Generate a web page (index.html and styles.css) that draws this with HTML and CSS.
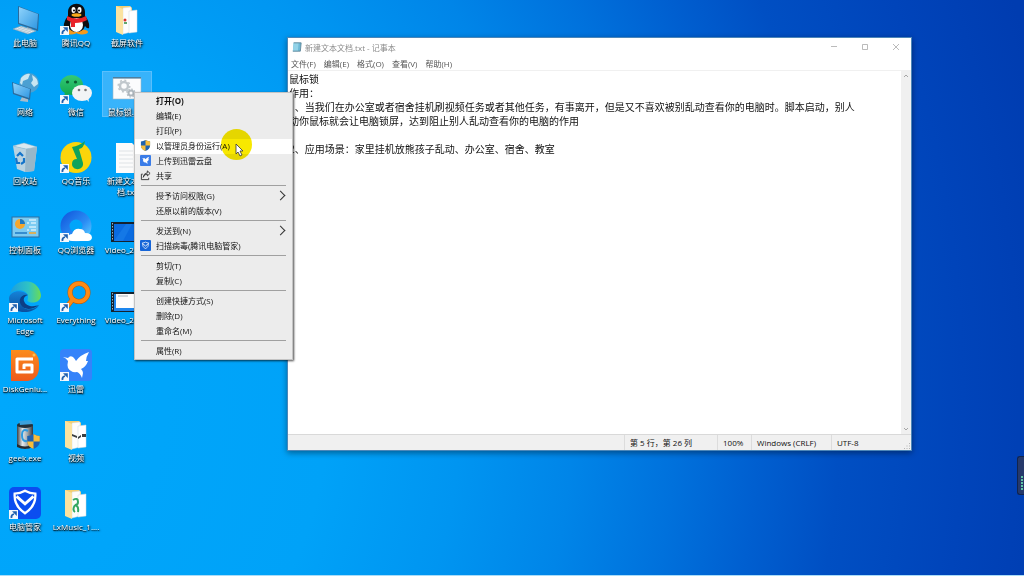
FILE: index.html
```html
<!DOCTYPE html>
<html lang="zh-CN">

<head>
    <meta charset="UTF-8">
    <meta name="viewport" content="width=device-width, initial-scale=1.0">
    <title>桌面</title>
    <link rel="stylesheet" href="styles.css">
</head>

<body>
    <!-- 公用图形 -->
    <svg class="defs" width="0" height="0" aria-hidden="true">
        <defs>
            <linearGradient id="screen" x1="0" y1="0" x2="1" y2="1">
                <stop offset="0" stop-color="#8fd3fb" />
                <stop offset="1" stop-color="#2f97e2" />
            </linearGradient>
            <linearGradient id="edge-top" x1="0" y1="0" x2="1" y2="0">
                <stop offset="0" stop-color="#1c9de0" />
                <stop offset="0.6" stop-color="#2fc3c4" />
                <stop offset="1" stop-color="#6bdc55" />
            </linearGradient>
            <linearGradient id="edge-bottom" x1="0" y1="0" x2="0" y2="1">
                <stop offset="0" stop-color="#1583d8" />
                <stop offset="1" stop-color="#0b4f9e" />
            </linearGradient>
            <linearGradient id="orange" x1="0" y1="0" x2="0" y2="1">
                <stop offset="0" stop-color="#fb8c1e" />
                <stop offset="1" stop-color="#ee5a1c" />
            </linearGradient>
            <linearGradient id="ring" x1="0" y1="0" x2="1" y2="1">
                <stop offset="0" stop-color="#1560e0" />
                <stop offset="0.6" stop-color="#2a8cf4" />
                <stop offset="1" stop-color="#4fc0ff" />
            </linearGradient>
            <linearGradient id="metal" x1="0" y1="0" x2="1" y2="0">
                <stop offset="0" stop-color="#3c4248" />
                <stop offset="0.35" stop-color="#e4e8eb" />
                <stop offset="0.65" stop-color="#a2a9ae" />
                <stop offset="1" stop-color="#33383d" />
            </linearGradient>
            <linearGradient id="green" x1="0" y1="0" x2="0" y2="1">
                <stop offset="0" stop-color="#35c977" />
                <stop offset="1" stop-color="#12a94f" />
            </linearGradient>
            <symbol id="shortcut" viewBox="0 0 9 9">
                <rect width="9" height="9" fill="#f4f8fc" />
                <path d="M2.500 8C2 5.500 3 4.500 5 4" fill="none" stroke="#1f5fae" stroke-width="1.800" />
                <path d="M3 1.200h4.800V6z" fill="#1f5fae" />
            </symbol>
            <symbol id="uac" viewBox="0 0 12 12">
                <path d="M6 0Q8.500 1.500 11 1.500V6Q11 10 6 12Q1 10 1 6V1.500Q3.500 1.500 6 0" fill="#1d62b0" />
                <path d="M6 0Q8.500 1.500 11 1.500V6H6zM1 6H6V12Q1 10 1 6" fill="#f7bd3a" />
            </symbol>
            <symbol id="folder" viewBox="0 0 32 32">
                <path d="M5 3h14l2 2v24H5z" fill="#f3cf72" />
                <path d="M12 5l8-1v25l-8 2z" fill="#fdfdfd" stroke="#d5dde2" stroke-width=".5" />
                <path d="M18 8l8-1v22l-8 1z" fill="#fff" stroke="#cfd8de" stroke-width=".5" />
                <path d="M5 3l7 3v26l-7-3z" fill="#fbe3a0" />
            </symbol>
            <!-- 蜂鸟 -->
            <symbol id="bird" viewBox="0 0 32 32">
                <path d="M3 8l5 1q2-3 5-1 2 2 3 4Q20 6 29 3q-3 5-3 9l2 0q-2 6-7 8 2 2 2 4l-1 5q-2-5-5-6-6 1-9-4-1-3 0-7-2-3-5-4z" fill="#fff" />
            </symbol>
            <symbol id="guard" viewBox="0 0 32 32">
                <path d="M5 7Q11 7 16 4Q21 7 27 7Q28 20 16 28Q4 20 5 7z" fill="none" stroke="#fff" stroke-width="2.500" />
                <path d="M7 10l9 8 9-8" fill="none" stroke="#fff" stroke-width="3" />
            </symbol>
        </defs>
    </svg>

    <main class="desktop">
        <div class="icons">
            <button class="icon">
                <svg class="icon-pic" viewBox="0 0 32 32">
                    <path d="M18 22l5 2v3l-5-1z" fill="#9fb7c6" />
                    <path d="M9 3l21 8-1 17-20-7z" fill="#2b6a9c" />
                    <path d="M10 4l19 7-1 15-18-6z" fill="url(#screen)" />
                    <path d="M4 26l8-3 15 5-8 3z" fill="#e4edf2" stroke="#7e9bb0" stroke-width=".6" />
                    <path d="M7 26l13 4M9 25l13 4M11 24l13 4" stroke="#86a3b5" stroke-width=".5" />
                </svg>
                <span class="icon-name">此电脑</span>
            </button>
            <button class="icon">
                <svg class="icon-pic" viewBox="0 0 32 32">
                    <circle cx="20" cy="11" r="10" fill="#4ba0d2" />
                    <path d="M12 6q5-5 9-4l-2 5-5 2-1 4-2-2zM23 3q6 3 6 9l-4 3-3-4 2-3z" fill="#c8e6f2" />
                    <path d="M13 25l6 2v3l-8-1z" fill="#a9bccb" />
                    <path d="M3 10l19 7-1 11-17-6z" fill="#2b6a9c" />
                    <path d="M4 11l17 6-1 9-15-5z" fill="url(#screen)" />
                </svg>
                <span class="icon-name">网络</span>
            </button>
            <button class="icon">
                <svg class="icon-pic" viewBox="0 0 32 32">
                    <path d="M4 5l13 3 11-2-3 24-9 1-8-3z" fill="#b9d3e1" />
                    <path d="M17 8l11-2-3 24-9 1z" fill="#98b7c9" />
                    <path d="M4 5l11-3 13 4-11 2z" fill="#dbe9f0" stroke="#9db9c8" stroke-width=".5" />
                    <path d="M8 15l3-3 3 3M7 17l1 5h3M15 17v4l-3 2" fill="none" stroke="#1474ca" stroke-width="2.200" />
                </svg>
                <span class="icon-name">回收站</span>
            </button>
            <button class="icon">
                <svg class="icon-pic" viewBox="0 0 32 32">
                    <rect x="3" y="7" width="27" height="20" fill="#7ccbf2" stroke="#2f6f9f" />
                    <circle cx="11" cy="14" r="5" fill="#f6a62b" />
                    <path d="M11 14V9a5 5 0 0 1 5 5z" fill="#1d79c4" />
                    <path d="M20 10h7M18 13h2M22 13h5M20 17h7M18 20h2M22 20h5" stroke="#d4effc" stroke-width="1.500" />
                    <path d="M6 23h12" stroke="#1d79c4" stroke-width="1.500" />
                    <path d="M20 23h7" stroke="#f6a62b" stroke-width="1.500" />
                </svg>
                <span class="icon-name">控制面板</span>
            </button>
            <button class="icon">
                <svg class="icon-pic" viewBox="0 0 32 32">
                    <path d="M1 14C4-2 29-4 32 15c0 6-6 9-12 7-3-1-1-2-1-5 0-8-13-9-18-3z" fill="url(#edge-top)" />
                    <path d="M0 18C1 10 14 9 19 15c-5-1-8 2-8 6 0 8 11 12 19 4C25 35 0 36 0 18z" fill="url(#edge-bottom)" />
                    <path d="M11 19c-2 9 9 14 19 6-5 2-13 2-15-4-1-3 1-5 4-6-4-1-7 1-8 4z" fill="#0c3f86" />
                    <use href="#shortcut" x="0" y="23" width="9" height="9" />
                </svg>
                <span class="icon-name">Microsoft Edge</span>
            </button>
            <button class="icon">
                <svg class="icon-pic" viewBox="0 0 32 32">
                    <path d="M2 1h18q10 2 10 13v4q0 12-11 14H2z" fill="url(#orange)" />
                    <path d="M24 10H8v13h15v-7h-8v4" fill="none" stroke="#fff" stroke-width="3" stroke-linejoin="round" />
                    <circle cx="25" cy="6" r="1.500" fill="#ffc04a" />
                </svg>
                <span class="icon-name">DiskGeniu...</span>
            </button>
            <button class="icon">
                <svg class="icon-pic" viewBox="0 0 32 32">
                    <path d="M8 7h16v21q-8 5-16 0z" fill="url(#metal)" />
                    <ellipse cx="16" cy="7" rx="8" ry="3" fill="#22303a" />
                    <path d="M10 3l12-1 2 4-13 1z" fill="#3ba1dc" />
                    <path d="M19 13q-6-3-6 4t5 6" fill="none" stroke="#2c9be0" stroke-width="2" />
                    <path d="M8 26q8 5 16 0v3q-8 4-16 0z" fill="#262b30" />
                    <use href="#uac" x="17" y="16" width="15" height="15" />
                </svg>
                <span class="icon-name">geek.exe</span>
            </button>
            <button class="icon">
                <svg class="icon-pic" viewBox="0 0 32 32">
                    <rect width="32" height="32" rx="5" fill="#0b4df0" />
                    <use href="#guard" x="1" y="0" width="30" height="30" />
                    <use href="#shortcut" x="0" y="23" width="9" height="9" />
                </svg>
                <span class="icon-name">电脑管家</span>
            </button>

            <button class="icon">
                <svg class="icon-pic" viewBox="0 0 32 32">
                    <ellipse cx="11" cy="29" rx="6" ry="2.500" fill="#f59a1b" />
                    <ellipse cx="22" cy="29" rx="6" ry="2.500" fill="#f59a1b" />
                    <path d="M8 9C8-2 25-2 25 9v4q5 6 4 12-2 1-4-2-2 6-8.500 6T8 23q-2 3-4 2-1-6 4-12z" fill="#0d0d0f" />
                    <ellipse cx="16.500" cy="22" rx="6.500" ry="7" fill="#fff" />
                    <path d="M7 13q10 5 19 0l1 4q-5 3-12 3v4h-4v-5l-4-2z" fill="#e8232a" />
                    <ellipse cx="13.500" cy="7" rx="2" ry="3" fill="#fff" />
                    <ellipse cx="19.500" cy="7" rx="2" ry="3" fill="#fff" />
                    <circle cx="14" cy="7.500" r="1" />
                    <circle cx="19" cy="7.500" r="1" />
                    <ellipse cx="16.500" cy="12" rx="5" ry="1.800" fill="#f8ab1c" />
                    <use href="#shortcut" x="0" y="23" width="9" height="9" />
                </svg>
                <span class="icon-name">腾讯QQ</span>
            </button>
            <button class="icon">
                <svg class="icon-pic" viewBox="0 0 32 32">
                    <path d="M5 20l-1 5 5-3z" fill="#17ae55" />
                    <ellipse cx="11.500" cy="13" rx="11.500" ry="10" fill="url(#green)" />
                    <circle cx="7.500" cy="10" r="1.600" fill="#0a5e34" />
                    <circle cx="15.500" cy="10" r="1.600" fill="#0a5e34" />
                    <path d="M25 26l4 4-1-6z" fill="#eef0f1" />
                    <ellipse cx="22" cy="21" rx="10" ry="8" fill="#f2f4f5" />
                    <circle cx="19" cy="18" r="1.300" fill="#777" />
                    <circle cx="25.500" cy="18" r="1.300" fill="#777" />
                    <use href="#shortcut" x="0" y="23" width="9" height="9" />
                </svg>
                <span class="icon-name">微信</span>
            </button>
            <button class="icon">
                <svg class="icon-pic" viewBox="0 0 32 32">
                    <circle cx="16" cy="16.500" r="15.500" fill="#fbd50b" />
                    <path d="M12 6q7-1 13-6-1 7-6 8l4 14c1 8-11 8-11 1q0-5 5-5z" fill="#10a35c" />
                    <use href="#shortcut" x="0" y="23" width="9" height="9" />
                </svg>
                <span class="icon-name">QQ音乐</span>
            </button>
            <button class="icon">
                <svg class="icon-pic" viewBox="0 0 32 32">
                    <circle cx="16" cy="16" r="11" fill="none" stroke="url(#ring)" stroke-width="9" />
                    <path d="M12 31q-5 0-4-4 1-3 4-3 2-6 8-5 4 0 5 4 7 0 7 5-1 3-4 3z" fill="#fff" />
                    <use href="#shortcut" x="0" y="23" width="9" height="9" />
                </svg>
                <span class="icon-name">QQ浏览器</span>
            </button>
            <button class="icon">
                <svg class="icon-pic" viewBox="0 0 32 32">
                    <path d="M13 19l-7 9" stroke="#b35a10" stroke-width="5" />
                    <circle cx="19" cy="12.500" r="9" fill="none" stroke="#b35a10" stroke-width="5" />
                    <path d="M13 19l-7 9" stroke="#ff8a14" stroke-width="4" />
                    <circle cx="19" cy="12.500" r="9" fill="none" stroke="#ff8a14" stroke-width="4" />
                    <use href="#shortcut" x="0" y="23" width="9" height="9" />
                </svg>
                <span class="icon-name">Everything</span>
            </button>
            <button class="icon">
                <svg class="icon-pic" viewBox="0 0 32 32">
                    <rect width="32" height="32" rx="4" fill="#3583fa" />
                    <use href="#bird" width="32" height="32" />
                    <use href="#shortcut" x="0" y="23" width="9" height="9" />
                </svg>
                <span class="icon-name">迅雷</span>
            </button>
            <button class="icon">
                <svg class="icon-pic" viewBox="0 0 32 32">
                    <use href="#folder" width="32" height="32" />
                    <path d="M12 16l5 2v2l-5-2zM18 19l3-2v2l-3 2zM22 16h4v3h-4z" fill="#3b3f42" />
                </svg>
                <span class="icon-name">视频</span>
            </button>
            <button class="icon">
                <svg class="icon-pic" viewBox="0 0 32 32">
                    <use href="#folder" width="32" height="32" />
                    <path d="M13 13q5-3 5 2 0 3-3 3 4 1 3 7M15 18q-3 5 0 7" fill="none" stroke="#35a862" stroke-width="2" />
                </svg>
                <span class="icon-name">LxMusic_1....</span>
            </button>

            <button class="icon">
                <svg class="icon-pic" viewBox="0 0 32 32">
                    <use href="#folder" width="32" height="32" />
                    <circle cx="14" cy="17" r="1.500" fill="#d8342b" />
                    <path d="M13 20h3" stroke="#2c8a3e" stroke-width="1.500" />
                </svg>
                <span class="icon-name">截屏软件</span>
            </button>
            <button class="icon icon-selected">
                <svg class="icon-pic" viewBox="0 0 32 32">
                    <rect x="2" y="6" width="28" height="21" fill="#fbfcfd" stroke="#9cb6c6" stroke-width=".6" />
                    <rect x="2" y="5" width="28" height="1.500" fill="#4e7f9f" />
                    <circle cx="13" cy="14" r="4" fill="none" stroke="#c0c7cc" stroke-width="2.500" />
                    <circle cx="13" cy="14" r="5.800" fill="none" stroke="#c0c7cc" stroke-width="1.500" stroke-dasharray="2 2.500" />
                    <circle cx="20" cy="21" r="2.500" fill="none" stroke="#aeb7bd" stroke-width="2" />
                    <circle cx="20" cy="21" r="4" fill="none" stroke="#aeb7bd" stroke-width="1.200" stroke-dasharray="1.500 1.600" />
                </svg>
                <span class="icon-name">鼠标锁.bat</span>
            </button>
            <button class="icon">
                <svg class="icon-pic" viewBox="0 0 32 32">
                    <path d="M5 2h16l5 5v25H5z" fill="#fbfbfb" />
                    <path d="M8 10h14M8 14h14M8 18h14M8 22h14M8 26h14" stroke="#dfe3e6" />
                </svg>
                <span class="icon-name">新建文本文档.txt</span>
            </button>
            <button class="icon">
                <svg class="icon-pic" viewBox="0 0 32 32">
                    <rect y="12" width="32" height="20" fill="#15222e" />
                    <rect x="3" y="14" width="26" height="17" fill="#0a6be0" />
                    <path d="M3 31l12-17h6L12 31z" fill="#1478e6" />
                    <path d="M1.500 13v18" stroke="#8fb5cf" stroke-dasharray="1.500 1.500" />
                </svg>
                <span class="icon-name">Video_202...</span>
            </button>
            <button class="icon">
                <svg class="icon-pic" viewBox="0 0 32 32">
                    <rect y="12" width="32" height="20" fill="#15222e" />
                    <rect x="3" y="14" width="26" height="17" fill="#1c86ee" />
                    <rect x="5" y="14" width="24" height="14" fill="#fdfdfd" />
                    <path d="M7 16h10" stroke="#a9b4bc" />
                    <path d="M1.500 13v18" stroke="#8fb5cf" stroke-dasharray="1.500 1.500" />
                </svg>
                <span class="icon-name">Video_202...</span>
            </button>
        </div>

        <!-- 记事本 -->
        <section class="notepad">
            <header class="titlebar">
                <svg class="title-icon" viewBox="0 0 12 12">
                    <path d="M2 1h9l-1 10H1z" fill="#6db9d6" />
                    <path d="M2 1h6L7 11H1z" fill="#93d3e8" />
                    <path d="M2 1h9M1 11h9l1-10" fill="none" stroke="#5a7f93" />
                </svg>
                <h1 class="title">新建文本文档.txt - 记事本</h1>
                <button class="win-btn" aria-label="最小化"><svg viewBox="0 0 8 8"><path d="M1 3.500h6" /></svg></button>
                <button class="win-btn" aria-label="最大化"><svg viewBox="0 0 8 8"><path d="M1.500 1.500h5v5h-5z" /></svg></button>
                <button class="win-btn" aria-label="关闭"><svg viewBox="0 0 8 8"><path d="M1 1l6 6M7 1L1 7" /></svg></button>
            </header>
            <nav class="menubar">
                <button>文件(F)</button>
                <button>编辑(E)</button>
                <button>格式(O)</button>
                <button>查看(V)</button>
                <button>帮助(H)</button>
            </nav>
            <div class="editor">
                <textarea class="text" aria-label="文本内容" spellcheck="false" wrap="off">鼠标锁
作用：
1、当我们在办公室或者宿舍挂机刷视频任务或者其他任务，有事离开，但是又不喜欢被别乱动查看你的电脑时。脚本启动，别人
动你鼠标就会让电脑锁屏，达到阻止别人乱动查看你的电脑的作用

2、应用场景：家里挂机放熊孩子乱动、办公室、宿舍、教室</textarea>
                <div class="scrollbar">
                    <button aria-label="向上滚动"><svg viewBox="0 0 8 8"><path d="M2 5l2-2 2 2" /></svg></button>
                    <button aria-label="向下滚动"><svg viewBox="0 0 8 8"><path d="M2 3l2 2 2-2" /></svg></button>
                </div>
            </div>
            <footer class="statusbar">
                <span class="cell cell-pos">第 5 行，第 26 列</span>
                <span class="cell cell-zoom">100%</span>
                <span class="cell cell-eol">Windows (CRLF)</span>
                <span class="cell cell-code">UTF-8</span>
                <svg class="grip" viewBox="0 0 8 8">
                    <path d="M6 1h1v1H6zM6 3.500h1v1H6zM6 6h1v1H6zM3.500 3.500h1v1h-1zM3.500 6h1v1h-1zM1 6h1v1H1z" />
                </svg>
            </footer>
        </section>

        <!-- 右键菜单 -->
        <div class="context-menu" role="menu">
            <button class="item item-default" role="menuitem">打开(O)</button>
            <button class="item" role="menuitem">编辑(E)</button>
            <button class="item" role="menuitem">打印(P)</button>
            <button class="item item-hover" role="menuitem">
                <svg class="item-icon" viewBox="0 0 12 12"><use href="#uac" width="12" height="12" /></svg>以管理员身份运行(A)
            </button>
            <button class="item" role="menuitem">
                <svg class="item-icon" viewBox="0 0 12 12"><rect width="12" height="12" rx="1" fill="#3b7de8" /><use href="#bird" x="1" y="1" width="10" height="10" /></svg>上传到迅雷云盘
            </button>
            <button class="item" role="menuitem">
                <svg class="item-icon" viewBox="0 0 12 12"><path d="M3 4.500H1.500v6h8V8.500M3.500 8Q4 4.500 8 4.500V6.500L11 3.700 8 1V3Q4 3.500 3.500 8" fill="none" stroke="#333" /></svg>共享
            </button>
            <hr>
            <button class="item item-sub" role="menuitem">授予访问权限(G)</button>
            <button class="item" role="menuitem">还原以前的版本(V)</button>
            <hr>
            <button class="item item-sub" role="menuitem">发送到(N)</button>
            <button class="item" role="menuitem">
                <svg class="item-icon" viewBox="0 0 12 12"><rect width="12" height="12" rx="1" fill="#1565d8" /><use href="#guard" x="1" y="1" width="10" height="10" /></svg>扫描病毒(腾讯电脑管家)
            </button>
            <hr>
            <button class="item" role="menuitem">剪切(T)</button>
            <button class="item" role="menuitem">复制(C)</button>
            <hr>
            <button class="item" role="menuitem">创建快捷方式(S)</button>
            <button class="item" role="menuitem">删除(D)</button>
            <button class="item" role="menuitem">重命名(M)</button>
            <hr>
            <button class="item" role="menuitem">属性(R)</button>
        </div>

        <!-- 鼠标指针和高亮圈 -->
        <div class="halo"></div>
        <svg class="pointer" viewBox="0 0 10 14">
            <path d="M1 1v10l2-2 2 4 2-1-2-4h3z" fill="#fff" stroke="#333" stroke-width=".8" />
        </svg>

        <!-- 右侧悬浮条 -->
        <div class="side-meter">
            <span></span><span></span><span></span><span></span><span></span>
        </div>
    </main>
</body>

</html>
```
FILE: styles.css
```css
* {
    box-sizing: border-box;
}

html,
body {
    height: 100%;
}

body {
    margin: 0;
    overflow: hidden;
    font-family: "Open Sans", "Noto Sans CJK SC", sans-serif;
    font-size: 8px;
    color: #111;
}

button {
    margin: 0;
    padding: 0;
    border: 0;
    background: none;
    font: inherit;
    color: inherit;
}

.defs {
    position: absolute;
}

.desktop {
    position: relative;
    height: 100vh;
    overflow: hidden;
    border-bottom: 1px solid #a9dcf8;
    background: radial-gradient(ellipse 100% 200% at 0% 70%, #00a8fc 0%, #00a2f8 32%, #0095f1 45%, #0085e8 56%, #0071dc 66%, #005fd0 74%, #004fc3 82%, #0044ba 94%, #003cb0 105%);
}

/* 桌面图标，按列排 */
.icons {
    display: grid;
    grid-auto-flow: column;
    grid-template-rows: repeat(8, 1fr);
    grid-auto-columns: 50px;
    column-gap: 1px;
    align-items: start;
    height: 100%;
    padding: 2px 0 20px;
}

.icon {
    display: flex;
    flex-direction: column;
    align-items: center;
    gap: 2px;
    padding-top: 1px;
}

.icon-pic {
    width: 32px;
    height: 32px;
}

.icon-name {
    max-width: 50px;
    line-height: 11px;
    text-align: center;
    color: #fff;
    text-shadow: 0 1px 1px #000, 1px 1px 2px #000;
}

.icon-selected {
    background: rgba(140, 205, 255, 0.4);
    outline: 1px solid rgba(170, 220, 255, 0.3);
    outline-offset: -1px;
}

/* 记事本 */
.notepad {
    position: absolute;
    top: 37px;
    right: 112px;
    bottom: 124px;
    left: 287px;
    display: flex;
    flex-direction: column;
    background: #fff;
    border: 1px solid #4c86b8;
    box-shadow: 0 2px 6px rgba(0, 0, 0, 0.4);
}

.titlebar {
    display: flex;
    align-items: center;
    height: 18px;
    padding-left: 4px;
    color: #8b8b8b;
}

.title-icon {
    width: 10px;
    height: 10px;
    margin-right: 3px;
}

.title {
    flex: 1;
    margin: 0;
    font-size: 8px;
    font-weight: normal;
}

.win-btn {
    width: 31px;
    height: 18px;
}

.win-btn svg {
    display: block;
    width: 8px;
    height: 8px;
    margin: 0 auto;
    fill: none;
    stroke: #aaa;
    stroke-width: 0.8;
}

.menubar {
    display: flex;
    gap: 8px;
    height: 15px;
    padding-left: 3px;
    border-bottom: 1px solid #f0f0f0;
    color: #555;
}

.editor {
    display: flex;
    flex: 1;
    min-height: 0;
}

.text {
    flex: 1;
    min-width: 0;
    padding: 1px 0 0 1px;
    border: 0;
    outline: 0;
    resize: none;
    overflow: hidden;
    font-family: "Open Sans", "Noto Sans CJK SC", sans-serif;
    font-size: 10px;
    line-height: 14px;
    color: #111;
}

.scrollbar {
    display: flex;
    flex-direction: column;
    justify-content: space-between;
    width: 10px;
    background: #f0f0f0;
}

.scrollbar button {
    height: 10px;
}

.scrollbar svg {
    display: block;
    width: 8px;
    height: 8px;
    margin: 1px;
    fill: none;
    stroke: #a5a5a5;
}

.statusbar {
    display: flex;
    justify-content: flex-end;
    height: 16px;
    border-top: 1px solid #d9d9d9;
    background: #f0f0f0;
}

.cell {
    padding-left: 5px;
    border-left: 1px solid #dcdcdc;
    line-height: 15px;
    white-space: nowrap;
}

.cell-pos {
    width: 93px;
}

.cell-zoom {
    width: 34px;
}

.cell-eol {
    width: 80px;
}

.cell-code {
    width: 72px;
}

.grip {
    align-self: flex-end;
    width: 8px;
    height: 8px;
    fill: #b5b5b5;
}

/* 右键菜单 */
.context-menu {
    position: absolute;
    top: 92px;
    left: 134px;
    display: flex;
    flex-direction: column;
    min-width: 159px;
    padding-top: 1px;
    background: #ececec;
    border: 1px solid #c4c4c4;
    box-shadow: 1px 1px 2px rgba(0, 0, 0, 0.7);
}

.context-menu hr {
    height: 1px;
    margin: 1px 6px 3px;
    border: 0;
    background: #a0a0a0;
}

.item {
    position: relative;
    height: 15px;
    padding: 0 21px 2px;
    line-height: 13px;
    text-align: left;
    white-space: nowrap;
}

.item-default {
    font-weight: bold;
}

.item-hover {
    background: #fff;
}

.item-icon {
    position: absolute;
    top: 1px;
    left: 5px;
    width: 11px;
    height: 11px;
}

.item-sub::after {
    content: "";
    position: absolute;
    top: 3px;
    right: 8px;
    width: 6px;
    height: 6px;
    border-top: 1px solid #333;
    border-right: 1px solid #333;
    transform: rotate(45deg);
}

.halo {
    position: absolute;
    top: 129px;
    left: 221px;
    width: 31px;
    height: 31px;
    border-radius: 50%;
    background: #f8e800;
    mix-blend-mode: multiply;
}

.pointer {
    position: absolute;
    top: 143px;
    left: 235px;
    width: 10px;
    height: 14px;
}

.side-meter {
    position: absolute;
    right: 0;
    bottom: 80px;
    display: flex;
    flex-direction: column;
    justify-content: flex-end;
    gap: 1px;
    width: 7px;
    height: 39px;
    padding: 4px 1px 4px 3px;
    border: 1px solid #12244d;
    border-right: 0;
    border-radius: 3px 0 0 3px;
    background: #26396b;
}

.side-meter span {
    height: 2px;
    background: #5fc3a4;
}
```
